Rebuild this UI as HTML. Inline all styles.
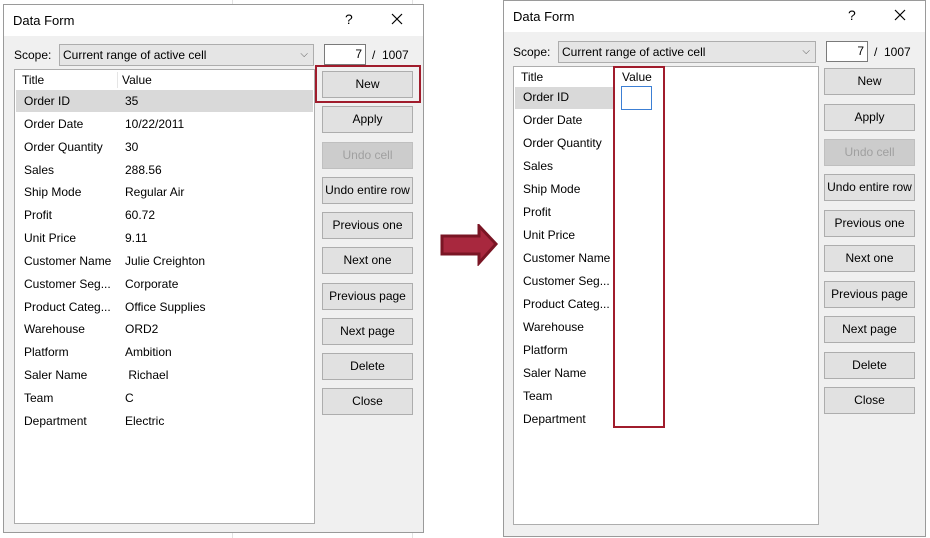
<!DOCTYPE html>
<html><head><meta charset="utf-8"><style>
*{margin:0;padding:0;box-sizing:border-box}
body{width:930px;height:538px;background:#fff;position:relative;overflow:hidden;font-family:"Liberation Sans",Arial,sans-serif;font-size:12px;color:#000}
.a{position:absolute;white-space:nowrap}
.dlg{position:absolute;background:#f0f0f0;border:1px solid #9a9a9a}
.tb{position:absolute;left:0;right:0;top:0;height:31px;background:#fff}
.combo{position:absolute;background:#e5e5e5;border:1px solid #adadad;height:22px;line-height:20px;padding-left:3px}
.num{position:absolute;background:#fff;border:1px solid #7a7a7a;height:21px;line-height:19px;text-align:right;padding-right:3px}
.list{position:absolute;background:#fff;border:1px solid #adadad}
.btn{position:absolute;width:91px;height:27px;background:#e1e1e1;border:1px solid #adadad;text-align:center;line-height:25px}
.dis{color:#a0a0a0;background:#ccc;border-color:#bfbfbf}
.red{position:absolute;border:2px solid #a01c2c}
</style></head><body>
<div class="a" style="left:412px;top:0;width:1px;height:538px;background:#e2e2e2"></div>
<div class="a" style="left:232px;top:0;width:1px;height:538px;background:#e2e2e2"></div>

<!-- LEFT -->
<div class="dlg" style="left:3px;top:4px;width:421px;height:529px">
<div class="tb"></div>
</div>
<div class="a" style="left:13px;top:13px;font-size:13px">Data Form</div>
<div class="a" style="left:345px;top:11px;font-size:14px">?</div>
<svg class="a" style="left:391px;top:13px" width="12" height="12"><path d="M1 1L11 11M11 1L1 11" stroke="#000" stroke-width="1.2"/></svg>
<div class="a" style="left:14px;top:48px">Scope:</div>
<div class="combo" style="left:59px;top:44px;width:255px">Current range of active cell<span style="position:absolute;right:5px;top:0;font-size:10px;color:#555">⌵</span></div>
<div class="num" style="left:324px;top:44px;width:42px">7</div>
<div class="a" style="left:372px;top:48px">/&nbsp; 1007</div>
<div class="list" style="left:14px;top:69px;width:301px;height:455px">
<div class="a" style="left:102px;top:2px;width:1px;height:16px;background:#e5e5e5"></div>
<div class="a" style="left:1px;top:20px;width:297px;height:22px;background:#d9d9d9"></div>
</div>
<div class="a" style="left:22px;top:73px">Title</div>
<div class="a" style="left:122px;top:73px">Value</div>
<div class="a" style="left:24px;top:90px;line-height:22.85px">Order ID<br>Order Date<br>Order Quantity<br>Sales<br>Ship Mode<br>Profit<br>Unit Price<br>Customer Name<br>Customer Seg...<br>Product Categ...<br>Warehouse<br>Platform<br>Saler Name<br>Team<br>Department</div>
<div class="a" style="left:125px;top:90px;line-height:22.85px">35<br>10/22/2011<br>30<br>288.56<br>Regular Air<br>60.72<br>9.11<br>Julie Creighton<br>Corporate<br>Office Supplies<br>ORD2<br>Ambition<br>&nbsp;Richael<br>C<br>Electric</div>
<div class="btn" style="left:322px;top:71px">New</div>
<div class="btn" style="left:322px;top:106px">Apply</div>
<div class="btn dis" style="left:322px;top:142px">Undo cell</div>
<div class="btn" style="left:322px;top:177px">Undo entire row</div>
<div class="btn" style="left:322px;top:212px">Previous one</div>
<div class="btn" style="left:322px;top:247px">Next one</div>
<div class="btn" style="left:322px;top:283px">Previous page</div>
<div class="btn" style="left:322px;top:318px">Next page</div>
<div class="btn" style="left:322px;top:353px">Delete</div>
<div class="btn" style="left:322px;top:388px">Close</div>
<div class="red" style="left:315px;top:65px;width:106px;height:38px"></div>

<!-- ARROW -->
<svg class="a" style="left:440px;top:224px" width="60" height="42"><polygon points="2,12 39,12 39,2 56,20 39,39 39,30 2,30" fill="#a8283e" stroke="#7a1524" stroke-width="3"/></svg>

<!-- RIGHT -->
<div class="dlg" style="left:503px;top:0px;width:423px;height:537px">
<div class="tb"></div>
</div>
<div class="a" style="left:513px;top:9px;font-size:13px">Data Form</div>
<div class="a" style="left:848px;top:7px;font-size:14px">?</div>
<svg class="a" style="left:894px;top:9px" width="12" height="12"><path d="M1 1L11 11M11 1L1 11" stroke="#000" stroke-width="1.2"/></svg>
<div class="a" style="left:513px;top:45px">Scope:</div>
<div class="combo" style="left:558px;top:41px;width:258px">Current range of active cell<span style="position:absolute;right:5px;top:0;font-size:10px;color:#555">⌵</span></div>
<div class="num" style="left:826px;top:41px;width:42px">7</div>
<div class="a" style="left:874px;top:45px">/&nbsp; 1007</div>
<div class="list" style="left:513px;top:66px;width:306px;height:459px">
<div class="a" style="left:1px;top:20px;width:99px;height:22px;background:#d9d9d9"></div>
</div>
<div class="a" style="left:521px;top:70px">Title</div>
<div class="a" style="left:622px;top:70px">Value</div>
<div class="a" style="left:523px;top:86px;line-height:23px">Order ID<br>Order Date<br>Order Quantity<br>Sales<br>Ship Mode<br>Profit<br>Unit Price<br>Customer Name<br>Customer Seg...<br>Product Categ...<br>Warehouse<br>Platform<br>Saler Name<br>Team<br>Department</div>
<div class="a" style="left:621px;top:86px;width:31px;height:24px;border:1px solid #3c7fd4;background:#fff"></div>
<div class="red" style="left:613px;top:66px;width:52px;height:362px"></div>
<div class="btn" style="left:824px;top:68px">New</div>
<div class="btn" style="left:824px;top:104px">Apply</div>
<div class="btn dis" style="left:824px;top:139px">Undo cell</div>
<div class="btn" style="left:824px;top:174px">Undo entire row</div>
<div class="btn" style="left:824px;top:210px">Previous one</div>
<div class="btn" style="left:824px;top:245px">Next one</div>
<div class="btn" style="left:824px;top:281px">Previous page</div>
<div class="btn" style="left:824px;top:316px">Next page</div>
<div class="btn" style="left:824px;top:352px">Delete</div>
<div class="btn" style="left:824px;top:387px">Close</div>
</body></html>
